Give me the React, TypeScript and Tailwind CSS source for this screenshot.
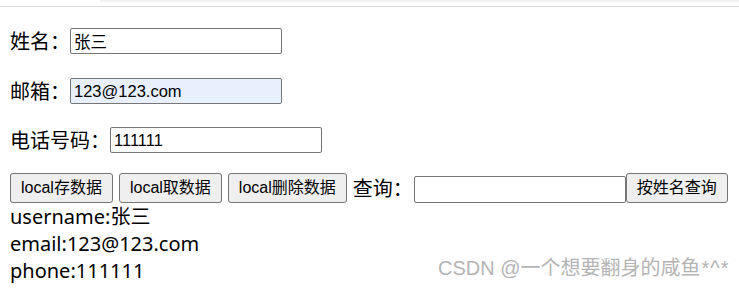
export default function App() {
  const label = "text-[20px] leading-[26px] text-black [font-family:'Noto_Sans_CJK_SC',sans-serif]";
  const input =
    "h-[26px] w-[212px] rounded-[2px] border border-[#767676] px-[3px] text-[16.5px] text-black outline-none [font-family:'Liberation_Sans','Noto_Sans_CJK_SC',sans-serif]";
  const button =
    "h-[30px] rounded-[3px] border border-[#767676] bg-[#efefef] px-[10px] text-[16px] text-black [font-family:'Liberation_Sans','Noto_Sans_CJK_SC',sans-serif]";

  return (
    <div className="relative h-[288px] w-[739px] overflow-hidden bg-white">
      {/* browser chrome leftovers */}
      <div className="flex h-[2px]">
        <div className="w-[100px]" />
        <div className="flex-1 bg-[#f1f1f1]" />
      </div>
      <div className="mt-[4px] h-px bg-[#d9d9d9]" />

      <div className="px-[10px]">
        <div className="mt-[21px] flex h-[26px] items-center">
          <span className={label}>姓名：</span>
          <input className={input} defaultValue="张三" />
        </div>
        <div className="mt-[24px] flex h-[26px] items-center">
          <span className={label}>邮箱：</span>
          <input className={`${input} bg-[#e8f0fe]`} defaultValue="123@123.com" />
        </div>
        <div className="mt-[23px] flex h-[26px] items-center">
          <span className={label}>电话号码：</span>
          <input className={input} defaultValue="111111" />
        </div>

        <div className="mt-[20px] flex h-[30px] items-end">
          <button className={button}>local存数据</button>
          <button className={`${button} ml-[6px]`}>local取数据</button>
          <button className={`${button} ml-[6px]`}>local删除数据</button>
          <span className={`${label} ml-[6px] self-center`}>查询：</span>
          <input className={`${input} ml-px h-[27px]`} />
          <button className={`${button} px-[10px]`}>按姓名查询</button>
        </div>

        <div className="text-[20px] leading-[27px] text-black [font-family:'Noto_Sans','Noto_Sans_CJK_SC',sans-serif]">
          <div>username:张三</div>
          <div>email:123@123.com</div>
          <div>phone:111111</div>
        </div>
      </div>

      {/* watermark */}
      <div className="absolute left-[438px] top-[255px] whitespace-nowrap text-[20px] leading-[27px] text-[#b4b4b4] [font-family:'Liberation_Sans','Noto_Sans_CJK_SC',sans-serif]">
        CSDN @一个想要翻身的咸鱼<span className="ml-px tracking-[1px]">*^*</span>
      </div>
    </div>
  );
}
